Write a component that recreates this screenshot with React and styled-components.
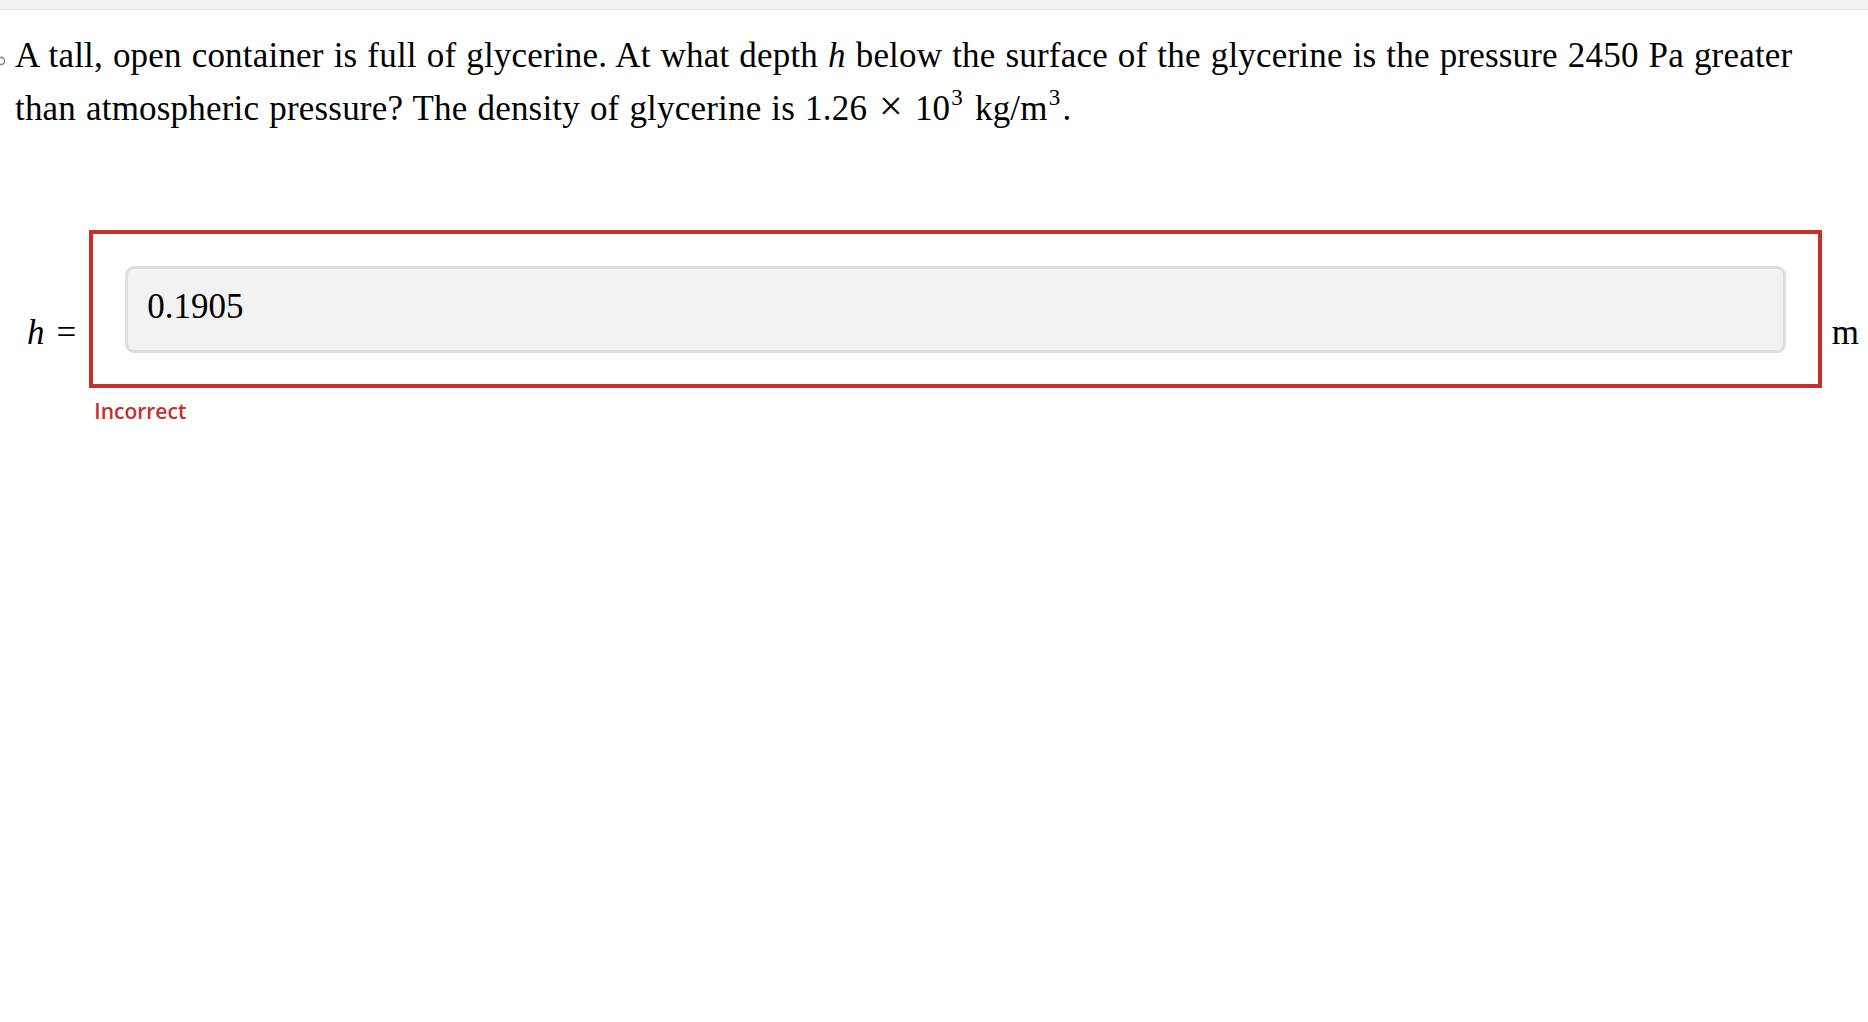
import React from "react";
import styled, { createGlobalStyle } from "styled-components";

const GlobalStyle = createGlobalStyle`
  html, body {
    margin: 0;
    padding: 0;
    background: #ffffff;
  }
  body {
    font-family: "Liberation Serif", "Times New Roman", serif;
    color: #000;
  }
`;

const RED = "#c4302b";

const Page = styled.div`
  width: 1868px;
  min-height: 1022px;
  background: #fff;
`;

const TopBar = styled.div`
  height: 9px;
  background: #f2f2f2;
  border-bottom: 1px solid #e6e6e6;
`;

const QuestionWrap = styled.div`
  display: flex;
  align-items: flex-start;
  gap: 9px;
  padding: 19px 60px 0 0;
`;

const Bullet = styled.svg`
  flex: none;
  margin-left: -4px;
  margin-top: 26px;
`;

const Question = styled.p`
  margin: 0;
  font-size: 35px;
  line-height: 53px;
  letter-spacing: 0.2px;
  word-spacing: 1px;
`;

const Var = styled.i`
  font-style: italic;
`;

const Times = styled.span`
  font-size: 42px;
  line-height: 0;
  margin: 0 2px;
`;

const Sup = styled.sup`
  font-size: 23px;
  line-height: 0;
  vertical-align: 0;
  position: relative;
  top: -15px;
  margin: 0 2px 0 1px;
`;

const AnswerGrid = styled.div`
  display: grid;
  grid-template-columns: auto 1fr auto;
  grid-template-rows: auto auto;
  margin-top: 95px;
  padding: 0 9px 0 27px;
`;

const Label = styled.div`
  align-self: end;
  font-size: 35px;
  line-height: 40px;
  padding-bottom: 35px;
  white-space: nowrap;
`;

const LeftLabel = styled(Label)`
  display: flex;
  gap: 12px;
  margin-right: 13px;
`;

const RightLabel = styled(Label)`
  margin-left: 10px;
`;

const FeedbackBox = styled.div`
  border: 4px solid ${(p) => (p.$wrong ? RED : "#2e7d32")};
  padding: 32px 32px 31px;
`;

const Input = styled.input`
  display: block;
  box-sizing: border-box;
  width: 100%;
  height: 87px;
  border: 3px solid #dedede;
  border-radius: 9px;
  background: #f2f2f2;
  padding: 0 0 5px 19px;
  font-family: "Liberation Serif", "Times New Roman", serif;
  font-size: 35px;
  color: #000;
  outline: none;
`;

const Feedback = styled.div`
  grid-column: 2;
  padding-left: 5px;
  margin-top: 9px;
  font-family: "Open Sans", "Liberation Sans", sans-serif;
  font-weight: 600;
  font-size: 21px;
  line-height: 28px;
  color: ${RED};
`;

export default function App() {
  return (
    <Page>
      <GlobalStyle />
      <TopBar />
      <QuestionWrap>
        <Bullet width="10" height="12" viewBox="0 0 10 12">
          <circle cx="5" cy="6" r="3.6" fill="none" stroke="#8a8a8a" strokeWidth="1.6" />
        </Bullet>
        <Question>
          A tall, open container is full of glycerine. At what depth <Var>h</Var> below
          the surface of the glycerine is the pressure 2450 Pa greater than atmospheric
          pressure? The density of glycerine is 1.26 <Times>×</Times> 10<Sup>3</Sup> kg/m<Sup>3</Sup>.
        </Question>
      </QuestionWrap>
      <AnswerGrid>
        <LeftLabel>
          <Var>h</Var>
          <span>=</span>
        </LeftLabel>
        <FeedbackBox $wrong>
          <Input defaultValue="0.1905" readOnly />
        </FeedbackBox>
        <RightLabel>m</RightLabel>
        <Feedback>Incorrect</Feedback>
      </AnswerGrid>
    </Page>
  );
}
